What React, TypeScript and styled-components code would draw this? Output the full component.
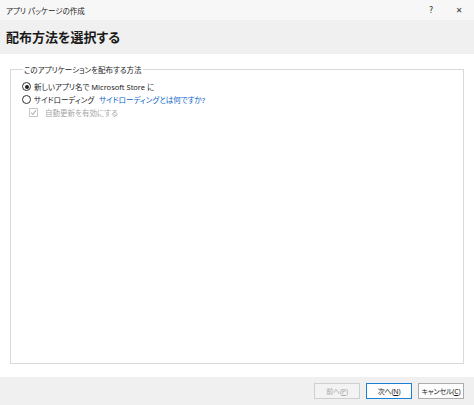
import styled, { createGlobalStyle } from "styled-components";

const GlobalStyle = createGlobalStyle`
  html, body {
    margin: 0;
    padding: 0;
    background: #ffffff;
  }
  body {
    font-family: "Noto Sans", "Noto Sans CJK JP", sans-serif;
    font-feature-settings: "palt";
    color: #1b1b1b;
  }
`;

const Window = styled.div`
  width: 474px;
  height: 405px;
  display: flex;
  flex-direction: column;
  background: #ffffff;
  overflow: hidden;
`;

const TitleBar = styled.div`
  height: 20px;
  display: flex;
  align-items: center;
  padding-left: 6px;
  background: #f7f7f7;
  font-size: 7.5px;
`;

const TitleText = styled.span`
  flex: 1;
  color: #222;
`;

const CaptionButton = styled.span<{ $width: number }>`
  width: ${(p) => p.$width}px;
  text-align: center;
  font-family: "DejaVu Sans", sans-serif;
  font-size: 8px;
  color: #333;
`;

const Header = styled.div`
  height: 34px;
  display: flex;
  align-items: center;
  padding-left: 6px;
  background: #f0f0f0;
`;

const Heading = styled.h1`
  margin: 0 0 2px;
  font-size: 13px;
  font-weight: 700;
  color: #1a1a1a;
`;

const Body = styled.div`
  flex: 1;
  display: flex;
  padding: 10px 10px 13px 10px;
`;

const Group = styled.fieldset`
  flex: 1;
  margin: 0;
  padding: 5px 0 0 11px;
  border: 1px solid #d9d9d9;
  font-size: 7.5px;
`;

const Legend = styled.legend`
  margin-left: 1px;
  padding: 0 1px;
  color: #1b1b1b;
`;

const OptionRow = styled.label<{ $indent?: number }>`
  height: 13px;
  display: flex;
  align-items: center;
  padding-left: ${(p) => p.$indent ?? 0}px;
`;

const Radio = styled.span<{ $checked?: boolean }>`
  width: 7px;
  height: 7px;
  border: 1px solid #333;
  border-radius: 50%;
  display: flex;
  align-items: center;
  justify-content: center;
  margin-right: 3px;
  &::after {
    content: "";
    width: 4px;
    height: 4px;
    border-radius: 50%;
    background: ${(p) => (p.$checked ? "#222" : "transparent")};
  }
`;

const Check = styled.span`
  width: 7px;
  height: 7px;
  border: 1px solid #c6c6c6;
  background: #fff;
  display: flex;
  align-items: center;
  justify-content: center;
  margin-right: 7px;
`;

const Text = styled.span<{ $disabled?: boolean }>`
  color: ${(p) => (p.$disabled ? "#a6a6a6" : "#1b1b1b")};
  white-space: nowrap;
`;

const Link = styled.a`
  margin-left: 5px;
  color: #0a64c8;
  text-decoration: none;
  white-space: nowrap;
`;

const Footer = styled.div`
  height: 27px;
  display: flex;
  align-items: center;
  justify-content: flex-end;
  gap: 6px;
  padding: 0 10px 1px 0;
  background: #f0f0f0;
`;

const Button = styled.button<{ $primary?: boolean }>`
  width: 46px;
  height: 16px;
  padding: 0;
  white-space: nowrap;
  font-family: inherit;
  font-feature-settings: "palt";
  font-size: 7px;
  letter-spacing: -0.2px;
  background: ${(p) => (p.disabled ? "#f3f3f3" : "#fdfdfd")};
  border: 1px solid
    ${(p) => (p.$primary ? "#1b7fd6" : p.disabled ? "#cfcfcf" : "#adadad")};
  color: ${(p) => (p.disabled ? "#a8a8a8" : "#1b1b1b")};
  u {
    text-underline-offset: 1px;
  }
`;

export default function App() {
  return (
    <>
      <GlobalStyle />
      <Window>
        <TitleBar>
          <TitleText>アプリ パッケージの作成</TitleText>
          <CaptionButton $width={26}>?</CaptionButton>
          <CaptionButton $width={30}>✕</CaptionButton>
        </TitleBar>
        <Header>
          <Heading>配布方法を選択する</Heading>
        </Header>
        <Body>
          <Group>
            <Legend>このアプリケーションを配布する方法</Legend>
            <OptionRow>
              <Radio $checked />
              <Text>新しいアプリ名で Microsoft Store に</Text>
            </OptionRow>
            <OptionRow>
              <Radio />
              <Text>サイドローディング</Text>
              <Link href="#">サイドローディングとは何ですか?</Link>
            </OptionRow>
            <OptionRow $indent={7}>
              <Check>
                <svg width="7" height="7" viewBox="0 0 7 7">
                  <path
                    d="M1 3.6 L2.8 5.4 L6 1.4"
                    fill="none"
                    stroke="#b5b5b5"
                    strokeWidth="1.1"
                  />
                </svg>
              </Check>
              <Text $disabled>自動更新を有効にする</Text>
            </OptionRow>
          </Group>
        </Body>
        <Footer>
          <Button disabled>
            前へ(<u>P</u>)
          </Button>
          <Button $primary>
            次へ(<u>N</u>)
          </Button>
          <Button>
            キャンセル(<u>C</u>)
          </Button>
        </Footer>
      </Window>
    </>
  );
}
